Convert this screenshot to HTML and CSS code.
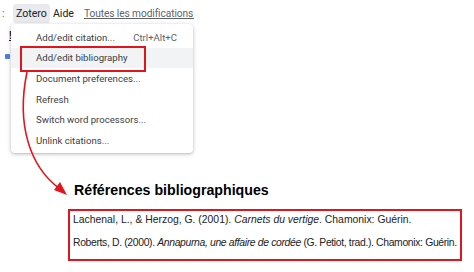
FILE: index.html
```html
<!DOCTYPE html>
<html lang="fr">
<head>
    <meta charset="UTF-8">
    <title>Zotero - Bibliographie</title>
    <link rel="stylesheet" href="styles.css">
</head>
<body>
    <div class="menubar">
        <span class="cut">:</span>
        <span class="menu-btn active">Zotero</span>
        <span class="menu-btn">Aide</span>
        <span class="last-edit">Toutes les modifications o</span>
    </div>

    <div class="doc-side">
        <span class="mark">!</span>
        <span class="blue-mark"></span>
    </div>

    <!-- Zotero dropdown -->
    <div class="dropdown">
        <div class="item"><span>Add/edit citation...</span><span class="shortcut">Ctrl+Alt+C</span></div>
        <div class="item hover"><span>Add/edit bibliography</span></div>
        <div class="item"><span>Document preferences...</span></div>
        <div class="item"><span>Refresh</span></div>
        <div class="item"><span>Switch word processors...</span></div>
        <div class="item"><span>Unlink citations...</span></div>
    </div>
    <div class="highlight-box"></div>

    <svg class="arrow" width="474" height="272" viewBox="0 0 474 272">
        <path d="M27 72 C 16 125, 30 167, 60 189" fill="none" stroke="#e2141c" stroke-width="1.6"/>
        <polygon points="67,195 54,190 60,182" fill="#e2141c"/>
    </svg>

    <div class="biblio">
        <h2>Références bibliographiques</h2>
        <div class="refs">
            <p>Lachenal, L., &amp; Herzog, G. (2001). <i>Carnets du vertige</i>. Chamonix: Guérin.</p>
            <p class="second">Roberts, D. (2000). <i>Annapurna, une affaire de cordée</i> (G. Petiot, trad.). Chamonix: Guérin.</p>
        </div>
    </div>
</body>
</html>
```

FILE: styles.css
```css
* {
    margin: 0;
    padding: 0;
    box-sizing: border-box;
}

body {
    width: 474px;
    height: 272px;
    background-color: #ffffff;
    font-family: Roboto, 'Liberation Sans', sans-serif;
    position: relative;
    overflow: hidden;
}

.menubar {
    display: flex;
    align-items: center;
    height: 24px;
    padding-top: 3px;
    font-size: 10.6px;
    color: #202124;
}

.cut {
    width: 13px;
    padding-left: 2px;
    color: #5f6368;
}

.menu-btn {
    padding: 3px 3px;
    border-radius: 3px;
}

.menu-btn.active {
    background-color: #e8eaed;
}

.last-edit {
    margin-left: 7px;
    color: #5f6368;
    text-decoration: underline;
    font-size: 10.2px;
    letter-spacing: -0.1px;
    width: 110px;
    overflow: hidden;
    white-space: nowrap;
}

.doc-side {
    display: flex;
    flex-direction: column;
    height: 40px;
    padding-left: 5px;
    padding-top: 5px;
    gap: 12px;
}

.mark {
    font-size: 11px;
    font-weight: bold;
    color: #202124;
    text-decoration: underline;
    padding-left: 4px;
}

.blue-mark {
    width: 5px;
    height: 5px;
    background-color: #4a7fe0;
    border-radius: 1px;
}

.dropdown {
    position: absolute;
    left: 11px;
    top: 24px;
    width: 182px;
    padding: 3px 0 2px;
    background-color: #ffffff;
    border-radius: 4px;
    box-shadow: 0 1px 4px rgba(60, 64, 67, 0.28), 0 1px 2px rgba(60, 64, 67, 0.15);
    font-size: 9.6px;
    color: #3c4043;
}

.item {
    display: flex;
    justify-content: space-between;
    align-items: center;
    height: 20.6px;
    padding: 0 16px 0 25px;
}

.item.hover {
    background-color: #f1f3f4;
}

.shortcut {
    color: #5f6368;
}

.highlight-box {
    position: absolute;
    left: 20px;
    top: 46px;
    width: 126px;
    height: 26px;
    border: 2px solid #e2141c;
}

.arrow {
    position: absolute;
    left: 0;
    top: 0;
}

.biblio {
    margin: 118px 0 0 68px;
    font-family: 'Liberation Sans', Arial, sans-serif;
}

.biblio h2 {
    font-size: 14.2px;
    line-height: 16px;
    font-weight: bold;
    color: #000000;
    padding-left: 6px;
    margin-bottom: 11px;
}

.refs {
    width: 394px;
    height: 52px;
    border: 2px solid #e2141c;
    padding-left: 3px;
    font-size: 10.4px;
    color: #222222;
}

.refs p {
    line-height: 18px;
    margin-bottom: 5px;
    white-space: nowrap;
}

.refs .second {
    letter-spacing: -0.35px;
}
```
